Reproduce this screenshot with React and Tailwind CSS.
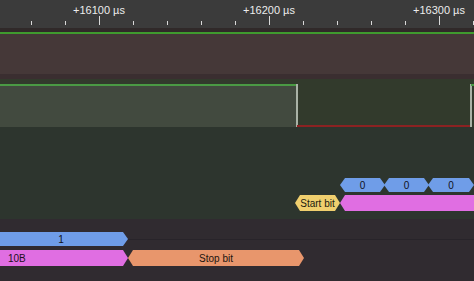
import React from "react";

const ticks = Array.from({ length: 14 }, (_, i) => 31 + i * 34);
const labels = [
  { x: 99, text: "+16100 µs" },
  { x: 269, text: "+16200 µs" },
  { x: 439, text: "+16300 µs" },
];

const hex =
  "[clip-path:polygon(5px_0,calc(100%_-_5px)_0,100%_50%,calc(100%_-_5px)_100%,5px_100%,0_50%)]";

// annotation box, placed on the time axis
const Ann = ({ left, width, color, text, align = "center", textColor = "text-[#101020]", pad = "px-[7px]" }) => (
  <div
    className={`absolute top-0 h-full flex items-center whitespace-nowrap text-[10px] ${pad} ${hex} ${color} ${textColor} ${
      align === "left" ? "justify-start" : "justify-center"
    }`}
    style={{ left, width }}
  >
    {text}
  </div>
);

export default function App() {
  return (
    <div className="w-[474px] h-[281px] overflow-hidden bg-[#302b30] flex flex-col font-['Liberation_Sans',Arial,sans-serif]">
      {/* ruler */}
      <div className="relative h-[28px] shrink-0 bg-[#3b3b3b]">
        {labels.map((l) => (
          <div
            key={l.x}
            className="absolute top-[2px] w-[80px] -ml-[40px] text-center text-[11px] text-[#ececec]"
            style={{ left: l.x }}
          >
            {l.text}
          </div>
        ))}
        {ticks.map((x) => {
          const major = labels.some((l) => l.x === x);
          return (
            <div
              key={x}
              className={`absolute w-px bg-[#d8d8d8] ${major ? "top-[16px] h-[9px]" : "top-[21px] h-[4px]"}`}
              style={{ left: x }}
            />
          );
        })}
      </div>
      <div className="h-[4px] shrink-0 bg-[#302929]" />
      <div className="h-[2px] shrink-0 bg-[#3f9a2e]" />

      {/* row 1 */}
      <div className="h-[40px] shrink-0 bg-[#453838]" />
      <div className="h-[5px] shrink-0 bg-[#3a2e30]" />

      {/* row 2: logic signal */}
      <div className="relative h-[48px] shrink-0 bg-[#323a2c]">
        <div className="absolute left-0 top-[5px] w-[296px] h-[43px] bg-[#424a3f] border-t-2 border-[#4a9a44]" />
        <div className="absolute left-[296px] top-[5px] w-[2px] h-[43px] bg-[#a9b2a6]" />
        <div className="absolute left-[297px] top-[46px] w-[174px] h-[2px] bg-[#8c2222]" />
        <div className="absolute left-[470px] top-[5px] w-[2px] h-[43px] bg-[#a9b2a6]" />
        <div className="absolute left-[471px] top-[5px] w-[3px] h-[2px] bg-[#4a9a44]" />
      </div>

      {/* row 3: decoder rows */}
      <div className="h-[92px] shrink-0 bg-[#2d352e] flex flex-col justify-end pb-[8px] gap-[3px]">
        <div className="relative h-[14px]">
          <Ann left={340} width={45} color="bg-[#6f9de8]" text="0" />
          <Ann left={384} width={45} color="bg-[#6f9de8]" text="0" />
          <Ann left={428} width={46} color="bg-[#6f9de8]" text="0" />
        </div>
        <div className="relative h-[16px]">
          <Ann left={295} width={45} color="bg-[#f0cf6e]" text="Start bit" textColor="text-[#1a1a10]" pad="px-[2px]" />
          <Ann left={340} width={150} color="bg-[#e06ee2]" text="" />
        </div>
      </div>

      {/* row 4 */}
      <div className="relative flex-1 bg-[#302b30] flex flex-col pt-[13px]">
        <div className="absolute left-0 right-0 top-[20px] h-px bg-[#28242a]" />
        <div className="relative h-[14px]">
          <Ann left={-6} width={134} color="bg-[#6f9de8]" text="1" />
        </div>
        <div className="relative h-[16px] mt-[4px]">
          <Ann left={-6} width={134} color="bg-[#e06ee2]" text="10B" align="left" textColor="text-[#201020]" pad="pl-[14px]" />
          <Ann left={128} width={176} color="bg-[#e8966c]" text="Stop bit" textColor="text-[#201510]" />
        </div>
      </div>
    </div>
  );
}
